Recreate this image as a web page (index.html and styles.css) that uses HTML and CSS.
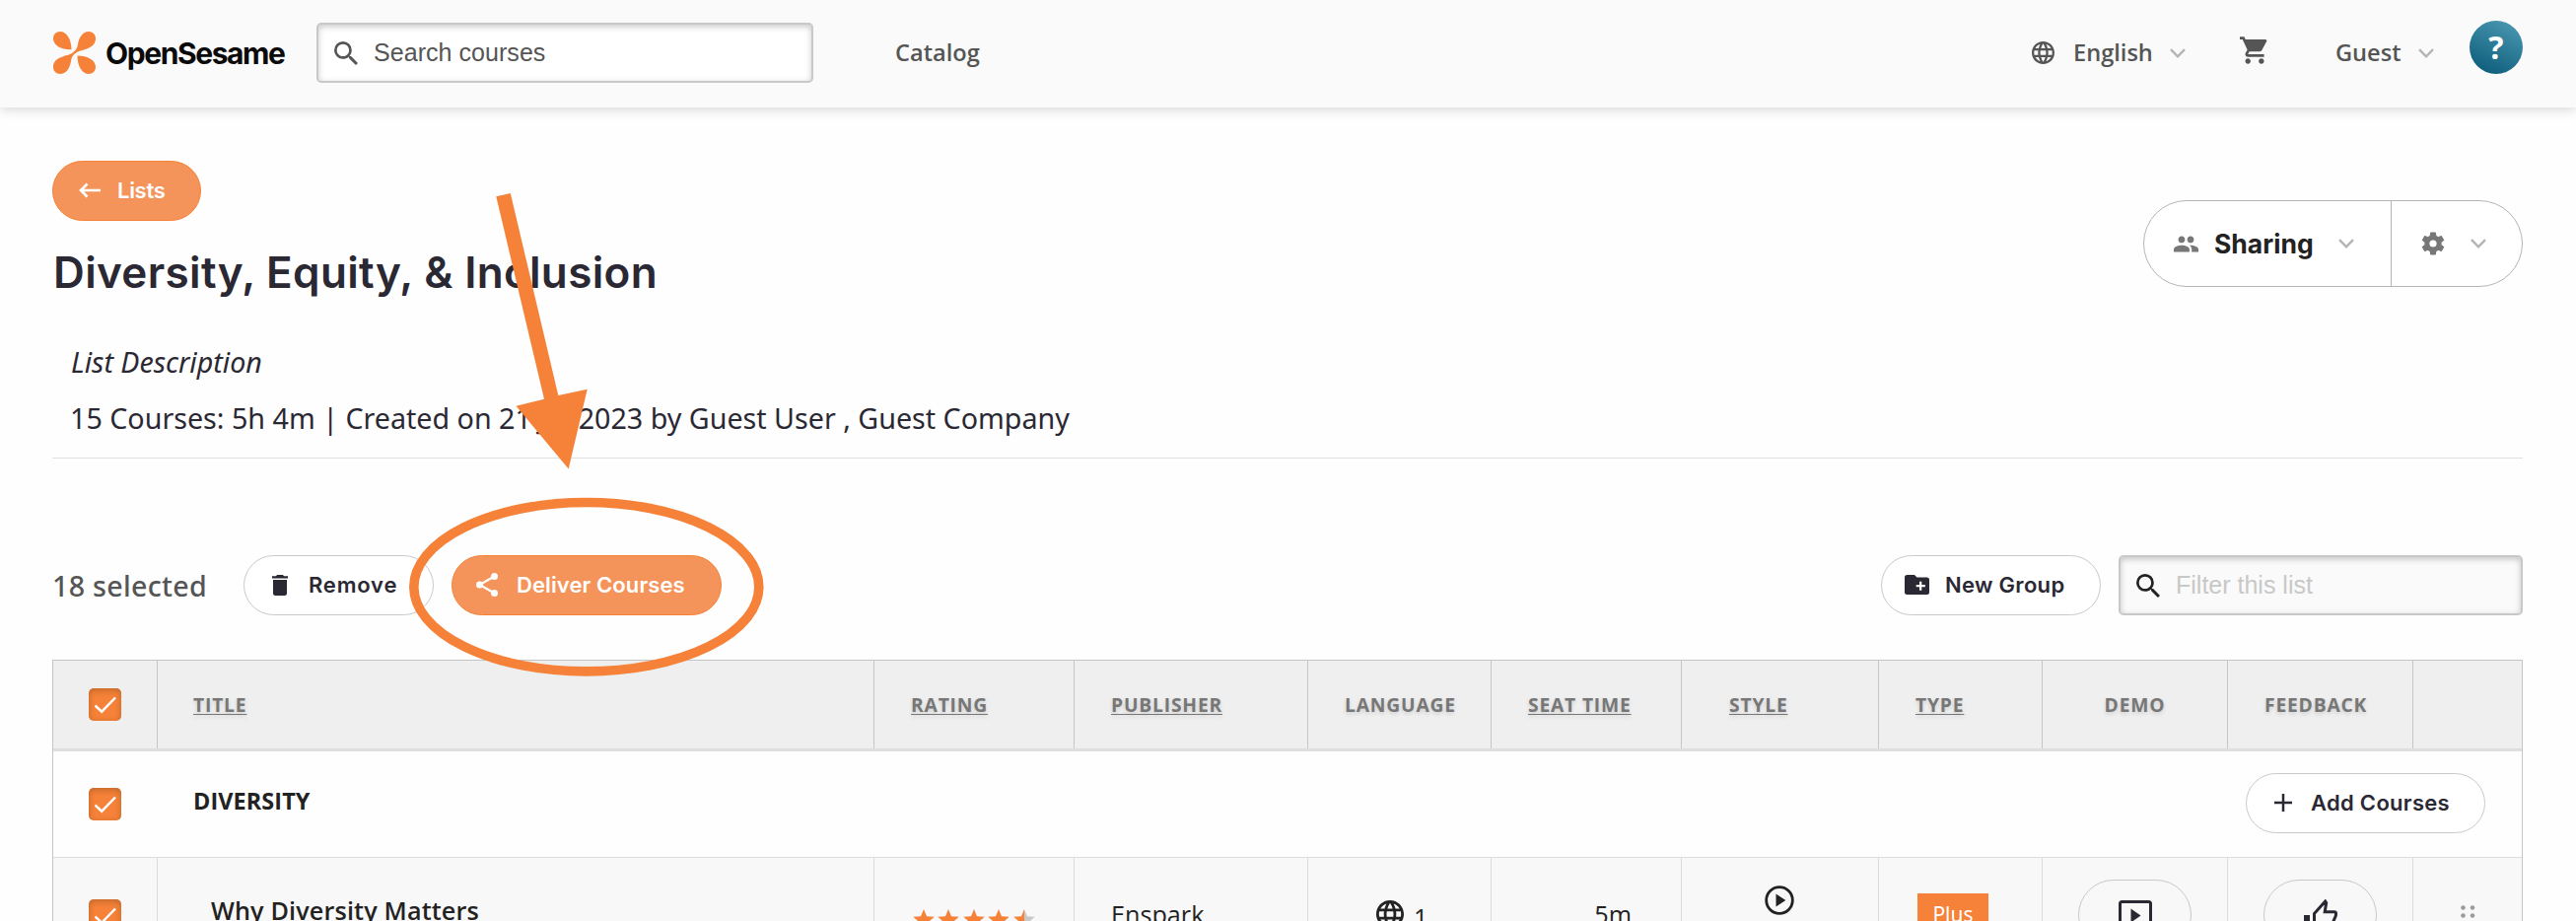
FILE: index.html
```html
<!DOCTYPE html>
<html lang="en">
<head>
<meta charset="utf-8">
<title>OpenSesame - Diversity, Equity, &amp; Inclusion</title>
<link rel="stylesheet" href="styles.css">
</head>
<body>
<svg class="sprite" aria-hidden="true">
  <symbol id="search" viewBox="3 3 17.5 17.5"><path d="M15.5 14h-.79l-.28-.27A6.47 6.47 0 0 0 16 9.5 6.5 6.5 0 1 0 9.5 16c1.61 0 3.09-.59 4.23-1.57l.27.28v.79l5 4.99L20.49 19l-4.99-5zm-6 0C7.01 14 5 11.99 5 9.5S7.01 5 9.5 5 14 7.01 14 9.5 11.99 14 9.5 14z"/></symbol>
  <symbol id="globe" viewBox="2 2 20 20"><path d="M11.99 2C6.47 2 2 6.48 2 12s4.47 10 9.99 10C17.52 22 22 17.52 22 12S17.52 2 11.99 2zm6.93 6h-2.95c-.32-1.25-.78-2.45-1.38-3.56 1.84.63 3.37 1.91 4.33 3.56zM12 4.04c.83 1.2 1.48 2.53 1.91 3.96h-3.82c.43-1.43 1.08-2.76 1.91-3.96zM4.26 14C4.1 13.36 4 12.69 4 12s.1-1.36.26-2h3.38c-.08.66-.14 1.32-.14 2s.06 1.34.14 2H4.26zm.82 2h2.95c.32 1.25.78 2.45 1.38 3.56-1.84-.63-3.37-1.9-4.33-3.56zm2.95-8H5.08c.96-1.66 2.49-2.93 4.33-3.56C8.81 5.55 8.35 6.75 8.03 8zM12 19.96c-.83-1.2-1.48-2.53-1.91-3.96h3.82c-.43 1.43-1.08 2.76-1.91 3.96zM14.34 14H9.66c-.09-.66-.16-1.32-.16-2s.07-1.35.16-2h4.68c.09.65.16 1.32.16 2s-.07 1.34-.16 2zm.25 5.56c.6-1.11 1.06-2.31 1.38-3.56h2.95c-.96 1.65-2.49 2.93-4.33 3.56zM16.36 14c.08-.66.14-1.32.14-2s-.06-1.34-.14-2h3.38c.16.64.26 1.31.26 2s-.1 1.36-.26 2h-3.38z"/></symbol>
  <symbol id="chevron" viewBox="0 0 16 10"><path d="M1 1.2l7 7.1 7-7.1" fill="none" stroke="currentColor" stroke-width="2.4"/></symbol>
  <symbol id="check" viewBox="0 0 24 18"><path d="M1.5 9.5l6.7 6.2L22 1.5" fill="none" stroke="currentColor" stroke-width="2.4"/></symbol>
  <symbol id="star" viewBox="0 0 22 21"><path d="M11 0l3 7.200 7.800.6-6 5.100 1.900 7.600-6.700-4.100-6.700 4.100 1.900-7.600-6-5.100 7.800-.6z"/></symbol>
</svg>

<header class="topbar">
  <div class="logo">
    <svg class="logo-mark" viewBox="0 0 43 43"><path d="M7 0C13 0 18.500 7 18.500 18.200C8 18.500 0 14 0 7C0 3 3 0 7 0zM36 43C30 43 24.500 36 24.500 24.500C35 24.500 43 29 43 36C43 40 40 43 36 43zM36 0C30 0 26 6 25 13C24.200 17 23 19 19 22C15 25 0 25 0 36C0 40 3 43 7 43C13 43 17 37 18 30C19 25 20 23.500 25 20.500C31 18 43 17 43 7C43 3 40 0 36 0z"/></svg>
    <span class="logo-name">OpenSesame</span>
  </div>
  <div class="field search-field"><svg class="i-search"><use href="#search"/></svg><span class="search-text">Search courses</span></div>
  <nav class="catalog">Catalog</nav>
  <div class="tools">
    <div class="language"><svg class="i-globe"><use href="#globe"/></svg><span>English</span><svg class="i-chev"><use href="#chevron"/></svg></div>
    <svg class="i-cart" viewBox="1 2 20.500 20"><path d="M7 18c-1.100 0-1.990.9-1.990 2S5.900 22 7 22s2-.9 2-2-.9-2-2-2zM1 2v2h2l3.600 7.590-1.350 2.450c-.16.28-.25.61-.25.96 0 1.100.9 2 2 2h12v-2H7.420c-.14 0-.25-.11-.25-.25l.03-.12.9-1.630h7.450c.75 0 1.410-.41 1.750-1.030l3.580-6.490A1 1 0 0 0 20 4H5.210l-.94-2H1zm16 16c-1.100 0-1.990.9-1.990 2s.89 2 1.990 2 2-.9 2-2-.9-2-2-2z"/></svg>
    <div class="guest"><span>Guest</span><svg class="i-chev"><use href="#chevron"/></svg></div>
    <div class="help">?</div>
  </div>
</header>

<main class="page">
  <section class="intro">
    <div>
      <button class="pill primary back"><svg class="i-back" viewBox="0 0 22 16"><path d="M22 8H2M8.500 1.500L2 8l6.500 6.500" fill="none" stroke="currentColor" stroke-width="2.600"/></svg><span>Lists</span></button>
      <h1 class="title">Diversity, Equity, &amp; Inclusion</h1>
      <p class="desc">List Description</p>
      <p class="meta">15 Courses: 5h 4m | Created on 21 Jul 2023 by Guest User , Guest Company</p>
    </div>
    <div class="actions">
      <div class="share"><svg class="i-people" viewBox="1 5 22 14"><path d="M16 11c1.660 0 2.990-1.340 2.990-3S17.660 5 16 5s-3 1.340-3 3 1.340 3 3 3zm-8 0c1.660 0 2.990-1.340 2.990-3S9.660 5 8 5 5 6.340 5 8s1.340 3 3 3zm0 2c-2.330 0-7 1.170-7 3.500V19h14v-2.500c0-2.330-4.670-3.500-7-3.500zm8 0c-.29 0-.62.02-.97.05 1.160.84 1.970 1.970 1.970 3.450V19h6v-2.500c0-2.330-4.670-3.500-7-3.500z"/></svg><span>Sharing</span><svg class="i-chev"><use href="#chevron"/></svg></div>
      <div class="settings"><svg class="i-gear" viewBox="2 2 20 20"><path fill-rule="evenodd" d="M19.140 12.940c.04-.3.06-.61.06-.94s-.02-.64-.07-.94l2.030-1.580c.18-.14.23-.41.12-.61l-1.920-3.320c-.12-.22-.37-.29-.59-.22l-2.390.96c-.5-.38-1.030-.7-1.620-.94l-.36-2.540A.48.48 0 0 0 13.920 2.400h-3.840c-.24 0-.43.17-.47.41l-.36 2.540c-.59.24-1.130.57-1.620.94l-2.390-.96c-.22-.08-.47 0-.59.22L2.740 8.870c-.12.210-.08.470.12.610l2.030 1.580c-.05.3-.09.63-.09.94s.02.64.07.94l-2.030 1.580c-.18.140-.23.410-.12.610l1.920 3.320c.12.220.37.290.59.220l2.390-.96c.5.380 1.030.7 1.620.94l.36 2.540c.05.240.24.410.48.410h3.840c.24 0 .44-.17.47-.41l.36-2.540c.59-.24 1.130-.56 1.620-.94l2.390.96c.22.080.47 0 .59-.22l1.920-3.320c.12-.22.07-.47-.12-.61l-2.010-1.580zM12 15a3 3 0 1 1 0-6 3 3 0 0 1 0 6z"/></svg><svg class="i-chev"><use href="#chevron"/></svg></div>
    </div>
  </section>

  <section class="toolbar">
    <span class="selected">18 selected</span>
    <button class="pill remove"><svg class="i-trash" viewBox="0 0 16 21"><path d="M5 0h6l1 1.200h4V3.600H0V1.200h4zM1 5h14v13.500Q15 21 12.500 21h-9Q1 21 1 18.500z"/></svg><span>Remove</span></button>
    <button class="pill primary deliver"><svg class="i-share" viewBox="0 0 22 24"><g fill="currentColor"><circle cx="3.500" cy="12" r="3.500"/><circle cx="18.500" cy="3.500" r="3.500"/><circle cx="18.500" cy="20.500" r="3.500"/></g><path d="M18.500 3.500L3.500 12l15 8.500" fill="none" stroke="currentColor" stroke-width="2.200"/></svg><span>Deliver Courses</span></button>
    <button class="pill newgroup"><svg class="i-folder" viewBox="0 0 25 20"><path fill-rule="evenodd" d="M2.500 0H10l2.500 2.500h10Q25 2.500 25 5v12.500Q25 20 22.500 20h-20Q0 20 0 17.500v-15Q0 0 2.500 0zM15 6.800V10h-3.300v2.300H15v3.400h2.300v-3.400h3.500V10h-3.500V6.800z"/></svg><span>New Group</span></button>
    <div class="field filter-field"><svg class="i-search"><use href="#search"/></svg><span class="filter-text">Filter this list</span></div>
  </section>

  <section class="table">
    <div class="row head">
      <div class="c-check"><span class="box"><svg><use href="#check"/></svg></span></div>
      <div class="left"><u>TITLE</u></div>
      <div class="left"><u>RATING</u></div>
      <div class="left"><u>PUBLISHER</u></div>
      <div class="left"><span>LANGUAGE</span></div>
      <div class="left"><u>SEAT TIME</u></div>
      <div class="h-style"><u>STYLE</u></div>
      <div class="left"><u>TYPE</u></div>
      <div class="center"><span>DEMO</span></div>
      <div class="left"><span>FEEDBACK</span></div>
      <div></div>
    </div>
    <div class="group">
      <div class="c-check"><span class="box"><svg><use href="#check"/></svg></span></div>
      <strong class="group-name">DIVERSITY</strong>
      <button class="pill add"><svg class="i-plus" viewBox="0 0 18 18"><path d="M9 0v18M0 9h18" fill="none" stroke="currentColor" stroke-width="2.500"/></svg><span>Add Courses</span></button>
    </div>
    <div class="row course">
      <div class="c-check"><span class="box"><svg><use href="#check"/></svg></span></div>
      <div class="name">Why Diversity Matters</div>
      <div class="stars">
        <svg><use href="#star"/></svg><svg><use href="#star"/></svg><svg><use href="#star"/></svg><svg><use href="#star"/></svg><svg viewBox="0 0 22 21"><path fill="#c9c9c9" d="M11 0l3 7.200 7.800.6-6 5.100 1.900 7.600-6.700-4.100z"/><path d="M11 0v16.400l-6.700 4.100 1.900-7.600-6-5.100 7.800-.6z"/></svg>
      </div>
      <div class="publisher">Enspark</div>
      <div class="lang"><svg><use href="#globe"/></svg><span>1</span></div>
      <div class="time">5m</div>
      <div class="style"><svg viewBox="0 0 30 30"><circle cx="15" cy="15" r="13.300" fill="none" stroke="currentColor" stroke-width="2.800"/><path d="M11.500 8.500l9.800 6.500-9.800 6.500z"/></svg></div>
      <div class="type"><span>Plus</span></div>
      <div class="cell-btn"><span class="pill round"><svg class="i-demo" viewBox="0 0 34 30"><rect x="1.500" y="1.500" width="31" height="27" rx="2" fill="none" stroke="currentColor" stroke-width="3"/><path d="M12.500 8.500L22.500 15.500l-10 7z"/></svg></span></div>
      <div class="cell-btn"><span class="pill round"><svg class="i-thumb" viewBox="0 0 34 32"><path d="M0 16h6V32H0z"/><path d="M10.500 30.500h14.300q1.500 0 2.200-1.500l5-11.500q.5-1 .5-2v-1q0-1.800-1.800-1.800h-9.500L22.700 3.500l-1-1.500L10.500 14.500z" fill="none" stroke="currentColor" stroke-width="3"/></svg></span></div>
      <div class="drag"><svg viewBox="0 0 16 40"><g fill="#9b9b9b"><circle cx="2.500" cy="2.500" r="2.300"/><circle cx="12" cy="2.500" r="2.300"/><circle cx="2.500" cy="10.500" r="2.300"/><circle cx="12" cy="10.500" r="2.300"/></g></svg></div>
    </div>
  </section>
</main>

<svg class="annotation" viewBox="0 0 2613 934">
  <path fill="#f58238" d="M503.300 199.300L517.800 196L566.300 401L595.700 394.700L576.700 475.500L523.500 411.700L552 404.700z"/>
  <ellipse cx="594.800" cy="595.200" rx="175" ry="85.700" fill="none" stroke="#f58238" stroke-width="9.600"/>
</svg>
</body>
</html>
```
FILE: styles.css
```css
* { box-sizing: border-box; }
html { height: 934px; overflow: hidden; }
body { margin: 0; width: 2613px; height: 934px; overflow: hidden; position: relative; background: #fefefe; color: #2a2833; font-family: "Open Sans", "Noto Sans", sans-serif; }
svg { fill: currentColor; flex: none; display: block; }
.sprite { position: absolute; width: 0; height: 0; }
button { font: inherit; color: inherit; margin: 0; }
span, u, p, h1, .catalog { white-space: nowrap; }

.topbar { position: relative; height: 109px; background: #fafafa; box-shadow: 0 2px 11px rgba(0,0,0,.16); display: flex; padding-left: 54px; color: #555; font-size: 23.6px; font-weight: 600; }
.logo { display: flex; width: 267px; height: 107px; align-items: center; gap: 10px; }
.logo-mark { width: 43px; height: 43px; color: #f58238; }
.logo-name { font: 700 30px/40px Inter, sans-serif; letter-spacing: -1.4px; color: #0a0a0a; }
.field { height: 61px; border: 2px solid #c8c8c8; border-radius: 5px; background: #fff; box-shadow: inset 0 2px 6px rgba(0,0,0,.22); display: flex; align-items: center; font-family: "Liberation Sans", sans-serif; font-weight: 400; }
.search-field { width: 504px; margin-top: 23px; padding-left: 16px; gap: 16px; }
.i-search { width: 24px; height: 24px; }
.search-text { font-size: 25px; letter-spacing: .05px; }
.catalog { margin-left: 83px; line-height: 106px; }
.tools { margin-left: auto; display: flex; align-items: center; height: 107px; padding-right: 54px; }
.language, .guest { display: flex; align-items: center; }
.language { width: 211px; }
.language span, .guest span { margin-top: -1px; }
.i-globe { width: 23px; height: 23px; margin-right: 19px; }
.i-chev { width: 16px; height: 10px; color: #b4b4b4; margin-left: 17px; }
.i-cart { width: 28px; height: 28px; margin: -5px 69px 0 0; }
.guest { width: 136px; }
.help { width: 54px; height: 54px; margin-top: -11px; border-radius: 50%; background: linear-gradient(205deg, #4795af 10%, #0b5a78 95%); color: #fff; text-align: center; font: 700 32px/54px "Open Sans", sans-serif; }

.page { height: 825px; overflow: hidden; padding: 0 54px 0 53px; }
.intro { height: 356px; border-bottom: 1px solid #e0e0e0; display: flex; justify-content: space-between; }
.pill { height: 61px; border: 1.5px solid #c9c9c9; border-radius: 31px; background: #fff; display: flex; align-items: center; padding: 0 0 1px; font: 600 22px/30px Inter, sans-serif; letter-spacing: .1px; }
.primary { background: #f5945a; border-color: #f58238; color: #fff; }
.back { width: 151px; margin-top: 54px; padding-left: 26px; letter-spacing: -.3px; }
.i-back { width: 22px; height: 16px; margin-right: 17px; }
.title { font: 600 44px/64px Inter, sans-serif; letter-spacing: .35px; margin: 20px 0 0 1px; }
.desc { font: italic 400 28.6px/40px "Noto Sans", sans-serif; margin: 39px 0 0 19px; }
.meta { font: 400 28.67px/40px "Noto Sans", sans-serif; margin: 17px 0 0 18px; }
.actions { display: flex; width: 385px; height: 88px; margin-top: 94px; border: 1px solid #b4b4b4; border-radius: 44px; background: #fff; color: #777; }
.share { width: 251px; border-right: 1px solid #b4b4b4; display: flex; align-items: center; padding-left: 30px; font: 700 26.5px/36px Inter, sans-serif; }
.share span { color: #222; margin-left: 16px; width: 103px; }
.share .i-chev { margin-left: 23px; }
.i-people { width: 25px; height: 17px; }
.settings { display: flex; align-items: center; padding-left: 30px; }
.settings .i-chev { margin-left: 26px; }
.i-gear { width: 24px; height: 24px; }

.toolbar { display: flex; align-items: center; margin-top: 98px; height: 61px; }
.selected { width: 194px; font: 500 28.6px/40px "Noto Sans", sans-serif; letter-spacing: .3px; color: #555; }
.remove { width: 193px; margin-right: 18px; padding-left: 28px; letter-spacing: .8px; }
.i-trash { width: 16px; height: 21px; margin-right: 21px; }
.deliver { width: 274px; padding-left: 24px; }
.i-share { width: 22px; height: 24px; margin-right: 19px; }
.newgroup { width: 223px; margin: 0 18px 0 auto; padding-left: 23px; letter-spacing: .3px; }
.i-folder { width: 25px; height: 20px; margin-right: 16px; }
.filter-field { width: 410px; background: #fafafa; padding-left: 16px; gap: 16px; }
.filter-field .i-search { color: #222; }
.filter-text { font-size: 25px; color: #c8c8c8; }

.table { margin-top: 45px; border: 1px solid #c4c4c4; border-bottom: 0; }
.row { display: grid; grid-template-columns: 106px 727px 203px 237px 186px 193px 200px 166px 188px 188px 1fr; }
.row > div { border-right: 1px solid #dcdcdc; display: flex; }
.row > div:last-child { border-right: 0; }
.head { height: 92px; background: #efefef; border-bottom: 3px solid #dedede; color: #777; font: 700 19.3px/26px "Open Sans", sans-serif; letter-spacing: .8px; text-shadow: 0 2px 4px rgba(0,0,0,.14); }
.row.head > div { border-color: #c6c6c6; align-items: center; }
.row .left { padding-left: 37px; }
.row .left:nth-child(2) { padding-left: 36px; }
.row .center { justify-content: center; }
.h-style { padding-left: 48px; }
.head u { text-underline-offset: 2px; text-decoration-thickness: 1px; }
.c-check { display: flex; justify-content: center; }
.box { width: 33px; height: 33px; border-radius: 5px; background: #f58238; color: #fff; box-shadow: inset 0 2px 6px rgba(90,50,20,.35); display: grid; place-items: center; }
.box svg { width: 24px; height: 18px; }
.group { height: 108px; display: flex; align-items: center; border-bottom: 1px solid #dcdcdc; background: #fefefe; }
.group .c-check { width: 105px; }
.group-name { margin: -7px auto 0 37px; font-size: 23.4px; letter-spacing: .1px; color: #222; }
.add { width: 243px; margin: -2px 37px 0 0; padding-left: 28px; letter-spacing: .3px; }
.i-plus { width: 18px; height: 18px; margin-right: 19px; }
.course { height: 110px; background: #f8f8f8; color: #222; font-size: 25.2px; line-height: 34px; }
.course .box { margin-top: 42px; }
.course .name { padding: 36px 0 0 54px; font-weight: 600; letter-spacing: .15px; }
.stars { padding: 52px 0 0 39px; gap: 3.4px; color: #f58238; }
.stars svg { width: 22px; height: 21px; }
.publisher { padding: 40px 0 0 37px; }
.lang { padding: 43px 0 0 69px; gap: 10px; }
.lang svg { width: 28px; height: 28px; }
.time { padding: 40px 50px 0 0; justify-content: flex-end; }
.style { padding: 28px 0 0 84px; }
.style svg { width: 30px; height: 30px; }
.type { padding: 36px 0 0 39px; }
.type span { width: 72px; height: 44px; background: #f58238; color: #fff; text-align: center; font: 400 21px/43px "Noto Sans", sans-serif; }
.cell-btn { padding: 22px 0 0 36px; }
.round { width: 115px; justify-content: center; height: 72px; border-radius: 36px; background: transparent; color: #2a2833; }
.i-demo { width: 34px; height: 30px; }
.i-thumb { width: 34px; height: 32px; }
.drag { padding: 48px 0 0 48px; }
.drag svg { width: 16px; height: 40px; }

.annotation { position: absolute; left: 0; top: 0; width: 2613px; height: 934px; pointer-events: none; }
```
